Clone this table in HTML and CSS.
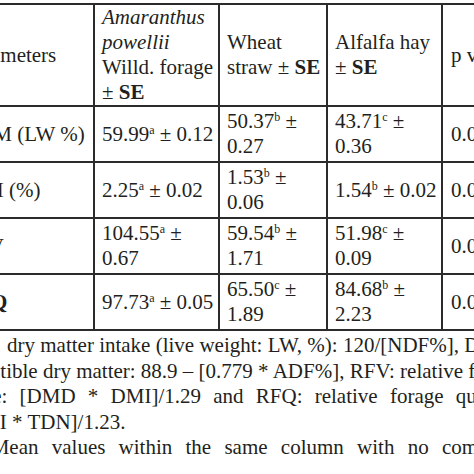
FILE: index.html
```html
<!DOCTYPE html>
<html>
<head>
<meta charset="utf-8">
<link rel="stylesheet" href="styles.css">
</head>
<body>
<div class="page">
  <table class="tbl">
    <colgroup>
      <col class="c1"><col class="c2"><col class="c3"><col class="c4"><col class="c5">
    </colgroup>
    <tr class="head">
      <td>Parameters</td>
      <td><i>Amaranthus<br>powellii</i><br>Willd. forage<br>± <b>SE</b></td>
      <td>Wheat<br>straw ± <b>SE</b></td>
      <td>Alfalfa hay<br>± <b>SE</b></td>
      <td>p value</td>
    </tr>
    <tr class="r56">
      <td>DDM (LW %)</td>
      <td>59.99<sup>a</sup> ± 0.12</td>
      <td>50.37<sup>b</sup> ±<br>0.27</td>
      <td>43.71<sup>c</sup> ±<br>0.36</td>
      <td>0.001</td>
    </tr>
    <tr class="r55">
      <td>DMI (%)</td>
      <td>2.25<sup>a</sup> ± 0.02</td>
      <td>1.53<sup>b</sup> ±<br>0.06</td>
      <td>1.54<sup>b</sup> ± 0.02</td>
      <td>0.001</td>
    </tr>
    <tr class="r56">
      <td>RFV</td>
      <td>104.55<sup>a</sup> ±<br>0.67</td>
      <td>59.54<sup>b</sup> ±<br>1.71</td>
      <td>51.98<sup>c</sup> ±<br>0.09</td>
      <td>0.001</td>
    </tr>
    <tr class="r55">
      <td><b>RFQ</b></td>
      <td>97.73<sup>a</sup> ± 0.05</td>
      <td>65.50<sup>c</sup> ±<br>1.89</td>
      <td>84.68<sup>b</sup> ±<br>2.23</td>
      <td>0.001</td>
    </tr>
  </table>
  <div class="notes">
    <div class="ln l1">dry matter intake (live weight: LW, %): 120/[NDF%], DMD: digestible</div>
    <div class="ln l2">digestible dry matter: 88.9 – [0.779 * ADF%], RFV: relative feed</div>
    <div class="ln l3">value: [DMD * DMI]/1.29 and RFQ: relative forage quality:</div>
    <div class="ln l4">[DMI * TDN]/1.23.</div>
    <div class="ln l5"><sup>a,b,c</sup>Mean values within the same column with no common superscript</div>
  </div>
</div>
</body>
</html>
```

FILE: styles.css
```css
html, body {
  margin: 0;
  padding: 0;
  background: #fff;
}
body {
  width: 474px;
  height: 474px;
  overflow: hidden;
  font-family: "Liberation Serif", "Times New Roman", serif;
  font-size: 21px;
  color: #231f20;
}
.page {
  margin-left: -46px;
  padding-top: 3px;
  width: 640px;
}
.tbl {
  border-collapse: collapse;
  table-layout: fixed;
  width: 588px;
  font-family: "Liberation Serif", "Times New Roman", serif;
}
.c1 { width: 139px; }
.c2 { width: 125px; }
.c3 { width: 108px; }
.c4 { width: 115px; }
.c5 { width: 101px; }
.tbl td {
  border: 2px solid #2b2b2b;
  padding: 0 6px 0 7px;
  line-height: 25px;
  vertical-align: middle;
  white-space: nowrap;
  overflow: hidden;
}
.tbl td:nth-child(5) {
  padding-left: 8px;
}
.head td { height: 98px; }
.r56 td { height: 54px; }
.r55 td { height: 54px; }
sup {
  font-size: 12px;
  line-height: 0;
  vertical-align: 7px;
}
.notes {
  margin-top: 2px;
}
.ln {
  white-space: nowrap;
  line-height: 25.5px;
}
.l1 { margin-left: 53px; }
.l2 { margin-left: 2px; }
.l3 { margin-left: 2px; word-spacing: 7px; }
.l4 { margin-left: 5px; }
.l5 { margin-left: 14px; word-spacing: 8px; }
```
